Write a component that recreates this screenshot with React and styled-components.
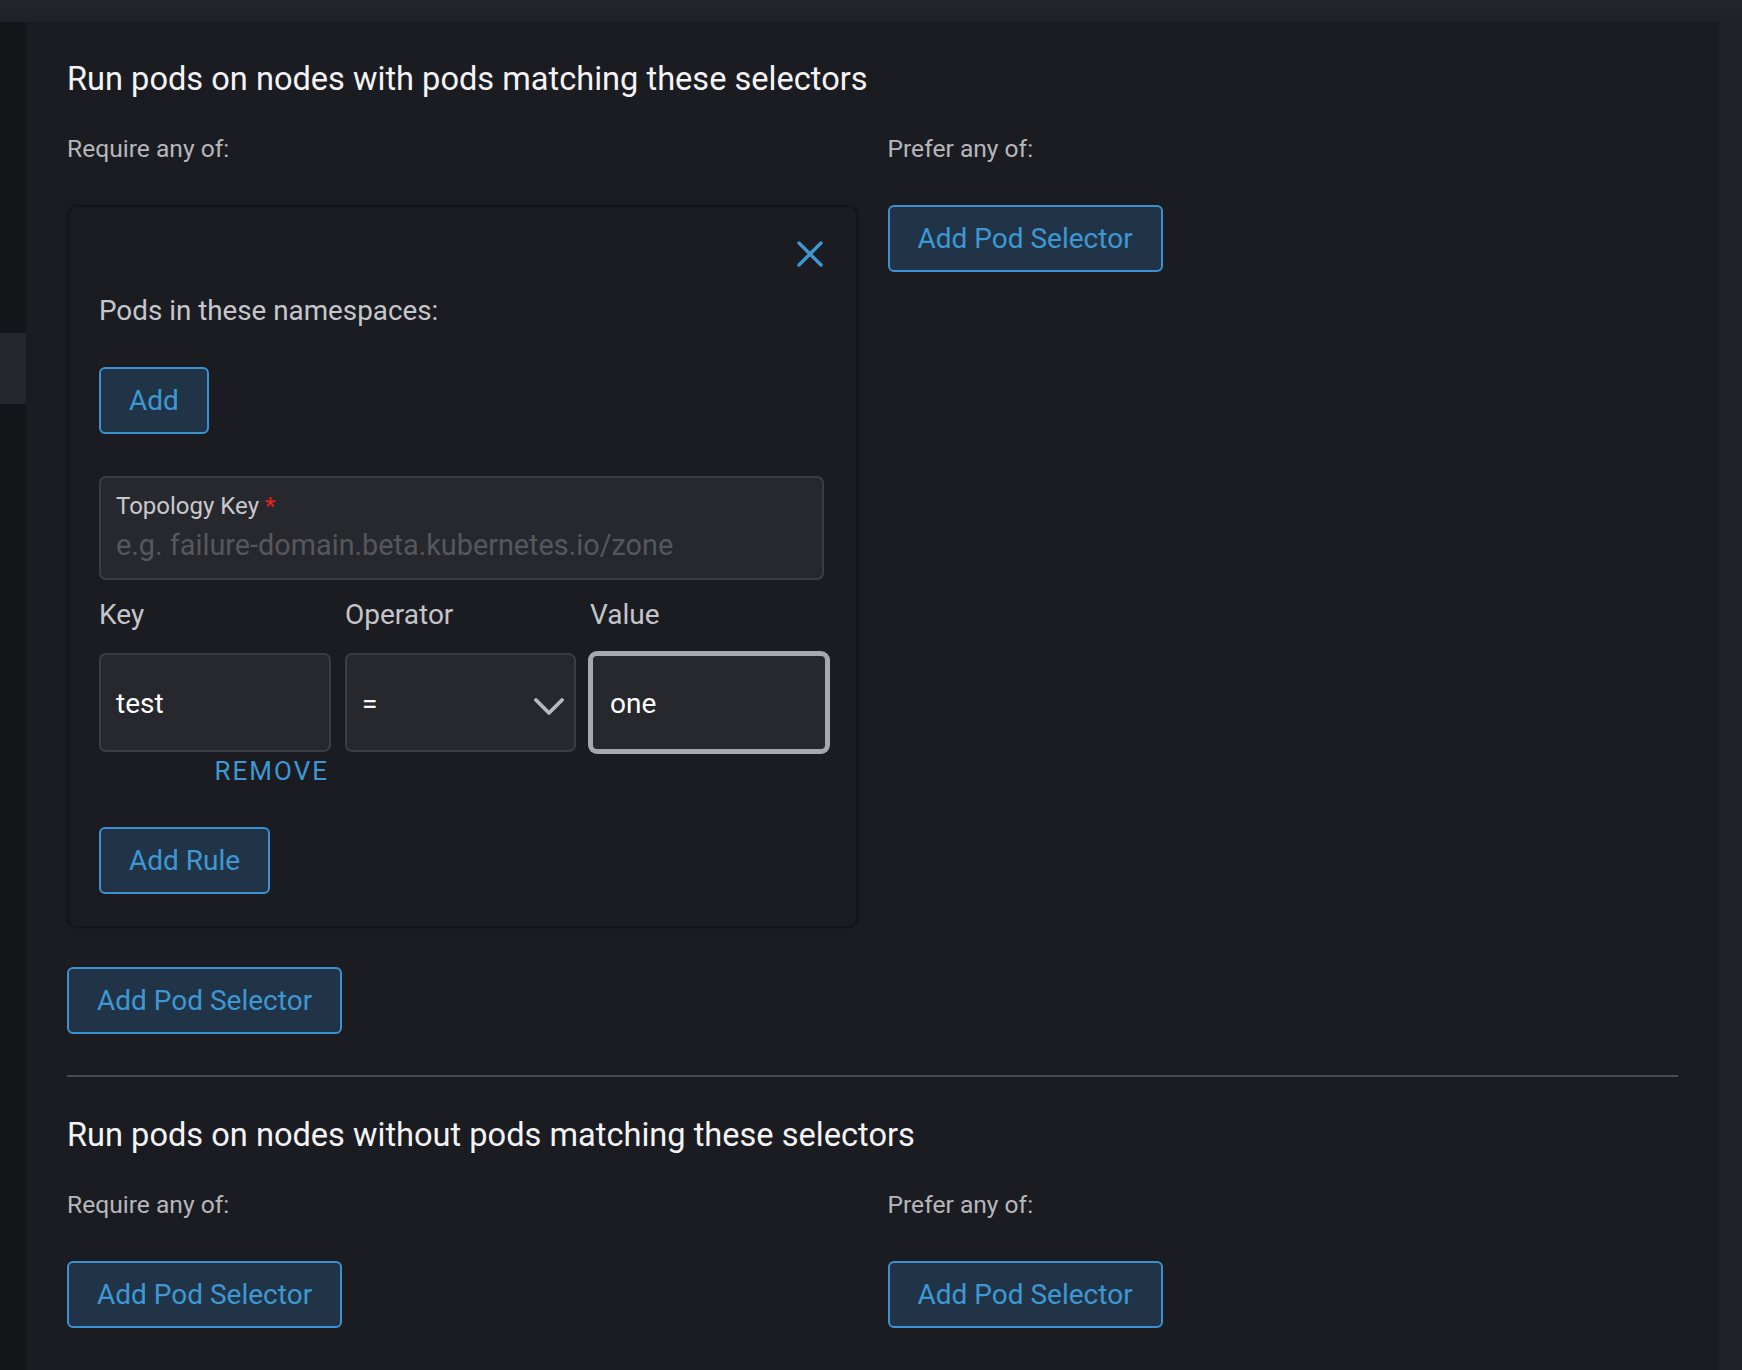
import React from "react";
import styled, { createGlobalStyle } from "styled-components";

const GlobalStyle = createGlobalStyle`
  html, body {
    margin: 0;
    padding: 0;
    background: #1b1c21;
  }
  body {
    font-family: Roboto, "Noto Sans", sans-serif;
    color: #f2f2f4;
  }
  * {
    box-sizing: border-box;
  }
`;

const BLUE = "#3d98d3";

const Page = styled.div`
  width: 1742px;
  height: 1370px;
  display: flex;
  flex-direction: column;
  overflow: hidden;
`;

const TopBar = styled.div`
  height: 22px;
  flex-shrink: 0;
  background: linear-gradient(#25262b, #202126);
`;

const Body = styled.div`
  flex: 1;
  display: flex;
`;

const Sidebar = styled.div`
  width: 26px;
  flex-shrink: 0;
  background: #141518;
  padding-top: 311px;
`;

const SideItem = styled.div`
  height: 71px;
  background: #26272c;
`;

const Main = styled.main`
  flex: 1;
  min-width: 0;
  background: #1b1c21;
  padding: 37px 40px 0 41px;
`;

const RightRail = styled.div`
  width: 24px;
  flex-shrink: 0;
  background: #202126;
`;

const Title = styled.h2`
  margin: 0;
  font-size: 32.6px;
  line-height: 40px;
  font-weight: 400;
  color: #f4f4f6;
`;

const Columns = styled.div`
  display: grid;
  grid-template-columns: minmax(0, 1fr) minmax(0, 1fr);
  column-gap: 30px;
  margin-top: 36px;
`;

const Column = styled.div`
  display: flex;
  flex-direction: column;
  align-items: flex-start;
`;

const SubLabel = styled.div`
  font-size: 24.6px;
  line-height: 28px;
  color: #b6b7bc;
  margin-bottom: 42px;
`;

const Button = styled.button`
  height: 67px;
  padding: 0 28px;
  border: 2px solid #3a92d2;
  border-radius: 6px;
  background: #213447;
  color: ${BLUE};
  font-family: Roboto, "Noto Sans", sans-serif;
  font-size: 28px;
  line-height: 1;
  white-space: nowrap;
  margin-top: ${(p) => p.$mt || 0}px;
`;

const Card = styled.div`
  align-self: stretch;
  border: 2px solid #141519;
  border-radius: 10px;
  box-shadow: 0 0 2px rgba(0, 0, 0, 0.35);
  padding: 28px 32px 32px 30px;
  margin-bottom: 39px;
  display: flex;
  flex-direction: column;
  align-items: flex-start;
`;

const CardHeader = styled.div`
  align-self: stretch;
  height: 38px;
  display: flex;
  justify-content: flex-end;
  align-items: center;
`;

const CloseButton = styled.button`
  width: 26px;
  height: 26px;
  padding: 0;
  margin-right: 1px;
  border: 0;
  background: none;
  display: flex;
`;

const SectionLabel = styled.div`
  margin-top: 20px;
  font-size: 27.8px;
  line-height: 36px;
  color: #c6c7cc;
`;

const LabeledInput = styled.div`
  align-self: stretch;
  margin-top: 42px;
  height: 104px;
  border: 2px solid #3c3d42;
  border-radius: 7px;
  background: #27282d;
  padding: 14px 15px 0;
`;

const FieldLabel = styled.div`
  font-size: 24px;
  line-height: 28px;
  color: #c8c9ce;
`;

const Required = styled.span`
  color: #f01f1f;
  margin-left: 6px;
`;

const Placeholder = styled.div`
  margin-top: 8px;
  font-size: 28.8px;
  line-height: 34px;
  color: #56575d;
  white-space: nowrap;
`;

const RuleGrid = styled.div`
  align-self: stretch;
  display: grid;
  grid-template-columns: 232px 231px 238px;
  column-gap: 14px;
  margin-top: 19px;
`;

const ColHead = styled.div`
  font-size: 28px;
  line-height: 32px;
  color: #c4c5ca;
  margin-bottom: 22px;
`;

const Field = styled.div`
  height: 99px;
  border: ${(p) => (p.$focused ? "3px solid #a7a8ad" : "2px solid #3c3d42")};
  box-shadow: ${(p) => (p.$focused ? "0 0 0 2px #a7a8ad" : "none")};
  border-radius: 7px;
  background: #27282d;
  padding: 2px ${(p) => (p.$focused ? 14 : 10)}px 0 ${(p) => (p.$focused ? 17 : 15)}px;
  display: flex;
  align-items: center;
  justify-content: space-between;
  font-size: 28px;
  color: #ffffff;
`;

const RemoveLink = styled.div`
  grid-column: 1;
  justify-self: end;
  margin-top: 4px;
  margin-right: 2px;
  font-size: 26px;
  line-height: 30px;
  letter-spacing: 2px;
  color: ${BLUE};
`;

const Divider = styled.hr`
  margin: 41px 0 38px;
  border: 0;
  height: 2px;
  background: #4a4b50;
`;

const CloseIcon = () => (
  <svg width="26" height="26" viewBox="0 0 26 26">
    <path
      d="M2 2 L24 24 M24 2 L2 24"
      stroke={BLUE}
      strokeWidth="3.4"
      strokeLinecap="round"
      fill="none"
    />
  </svg>
);

const Chevron = () => (
  <svg width="30" height="20" viewBox="0 0 30 20" style={{ marginTop: 6 }}>
    <polyline
      points="2,3 15,16 28,3"
      stroke="#b8b9be"
      strokeWidth="3.8"
      strokeLinecap="round"
      strokeLinejoin="round"
      fill="none"
    />
  </svg>
);

const SelectorCard = () => (
  <Card>
    <CardHeader>
      <CloseButton aria-label="Remove">
        <CloseIcon />
      </CloseButton>
    </CardHeader>
    <SectionLabel>Pods in these namespaces:</SectionLabel>
    <Button $mt={38}>Add</Button>
    <LabeledInput>
      <FieldLabel>
        Topology Key<Required>*</Required>
      </FieldLabel>
      <Placeholder>e.g. failure-domain.beta.kubernetes.io/zone</Placeholder>
    </LabeledInput>
    <RuleGrid>
      <ColHead>Key</ColHead>
      <ColHead>Operator</ColHead>
      <ColHead>Value</ColHead>
      <Field>test</Field>
      <Field>
        =
        <Chevron />
      </Field>
      <Field $focused>one</Field>
      <RemoveLink>REMOVE</RemoveLink>
    </RuleGrid>
    <Button $mt={41}>Add Rule</Button>
  </Card>
);

const AffinitySection = ({ title, withCard }) => (
  <>
    <Title>{title}</Title>
    <Columns>
      <Column>
        <SubLabel>Require any of:</SubLabel>
        {withCard && <SelectorCard />}
        <Button>Add Pod Selector</Button>
      </Column>
      <Column>
        <SubLabel>Prefer any of:</SubLabel>
        <Button>Add Pod Selector</Button>
      </Column>
    </Columns>
  </>
);

export default function App() {
  return (
    <>
      <GlobalStyle />
      <Page>
        <TopBar />
        <Body>
          <Sidebar>
            <SideItem />
          </Sidebar>
          <Main>
            <AffinitySection
              title="Run pods on nodes with pods matching these selectors"
              withCard
            />
            <Divider />
            <AffinitySection title="Run pods on nodes without pods matching these selectors" />
          </Main>
          <RightRail />
        </Body>
      </Page>
    </>
  );
}
